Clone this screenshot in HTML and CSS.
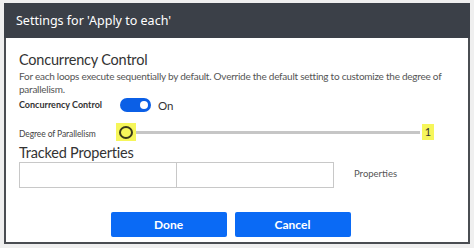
FILE: index.html
```html
<!DOCTYPE html>
<html lang="en">
<head>
    <meta charset="UTF-8">
    <title>Settings for 'Apply to each'</title>
    <link rel="stylesheet" href="styles.css">
</head>
<body>
    <div class="dialog">
        <div class="dialog-header">Settings for 'Apply to each'</div>
        <div class="dialog-body">
            <div class="section-title">Concurrency Control</div>
            <p class="section-desc">For each loops execute sequentially by default. Override the default setting to customize the degree of parallelism.</p>
            <div class="toggle-row">
                <span class="toggle-label">Concurrency Control</span>
                <span class="toggle"><span class="toggle-knob"></span></span>
                <span class="toggle-state">On</span>
            </div>
            <div class="slider-row">
                <span class="slider-label">Degree of Parallelism</span>
                <span class="slider-thumb-wrap"><span class="slider-thumb"></span></span>
                <span class="slider-track"></span>
                <span class="slider-value">1</span>
            </div>
            <div class="section-title tracked-title">Tracked Properties</div>
            <div class="props-row">
                <input type="text" class="prop-input">
                <input type="text" class="prop-input">
                <span class="props-label">Properties</span>
            </div>
            <div class="dialog-actions">
                <button class="action-button">Done</button>
                <button class="action-button">Cancel</button>
            </div>
        </div>
    </div>
</body>
</html>
```

FILE: styles.css
```css
* {
    margin: 0;
    padding: 0;
    box-sizing: border-box;
    font-family: 'Lato', 'Noto Sans', sans-serif;
}

body {
    background-color: #efefef;
    padding: 3px 4px 4px 4px;
    width: 474px;
    height: 248px;
    overflow: hidden;
}

.dialog {
    background-color: #ffffff;
    border: 2px solid #4a4d52;
    border-top: none;
    height: 241px;
}

.dialog-header {
    background-color: #3b4048;
    color: #ffffff;
    height: 35px;
    margin: 0 -2px;
    padding: 0 12px;
    display: flex;
    align-items: center;
    font-family: 'Noto Sans', sans-serif;
    font-size: 12.5px;
}

.dialog-body {
    padding: 13px 13px 0 13px;
    color: #333333;
}

.section-title {
    font-size: 14.5px;
    letter-spacing: -0.2px;
    line-height: 18px;
    color: #333333;
}

.section-desc {
    font-size: 10px;
    letter-spacing: -0.25px;
    line-height: 13px;
    color: #555555;
    margin-top: 1px;
}

.toggle-row {
    display: flex;
    align-items: center;
    height: 16px;
}

.toggle-label {
    font-size: 9px;
    font-weight: 700;
    width: 101px;
}

.toggle {
    width: 31px;
    height: 14px;
    border-radius: 7px;
    background-color: #0b5fe6;
    position: relative;
    margin-top: 1px;
}

.toggle-knob {
    position: absolute;
    right: 3px;
    top: 3px;
    width: 8px;
    height: 8px;
    border-radius: 50%;
    background-color: #ffffff;
}

.toggle-state {
    font-size: 11.5px;
    margin-left: 7px;
    margin-top: 2px;
}

.slider-row {
    display: flex;
    align-items: center;
    margin-top: 11px;
    height: 18px;
}

.slider-label {
    font-size: 8.5px;
    letter-spacing: -0.1px;
    color: #444444;
    width: 97px;
    margin-top: 3px;
}

.slider-thumb-wrap {
    background-color: #f6f65a;
    width: 20px;
    height: 18px;
    display: flex;
    align-items: center;
    justify-content: center;
}

.slider-thumb {
    width: 14px;
    height: 13px;
    border: 2px solid #3a3a1a;
    border-radius: 50%;
    background-color: #f6f65a;
}

.slider-track {
    flex: 0 0 284px;
    height: 3px;
    background-color: #c6c6c6;
}

.slider-value {
    background-color: #f6f65a;
    font-size: 11px;
    width: 12px;
    height: 16px;
    margin-left: 2px;
    text-align: center;
    line-height: 16px;
}

.tracked-title {
    margin-top: 3px;
}

.props-row {
    display: flex;
    align-items: center;
}

.prop-input {
    width: 158px;
    height: 26px;
    border: 1px solid #c8c8c8;
    outline: none;
}

.prop-input + .prop-input {
    margin-left: -1px;
}

.props-label {
    font-size: 9.5px;
    color: #555555;
    margin-left: 20px;
    margin-bottom: 4px;
}

.dialog-actions {
    display: flex;
    justify-content: center;
    gap: 8px;
    margin-top: 24px;
    padding-right: 13px;
}

.action-button {
    width: 116px;
    height: 25px;
    background-color: #0a6af5;
    color: #ffffff;
    border: none;
    border-radius: 2px;
    font-weight: 700;
    font-size: 12px;
}
```
